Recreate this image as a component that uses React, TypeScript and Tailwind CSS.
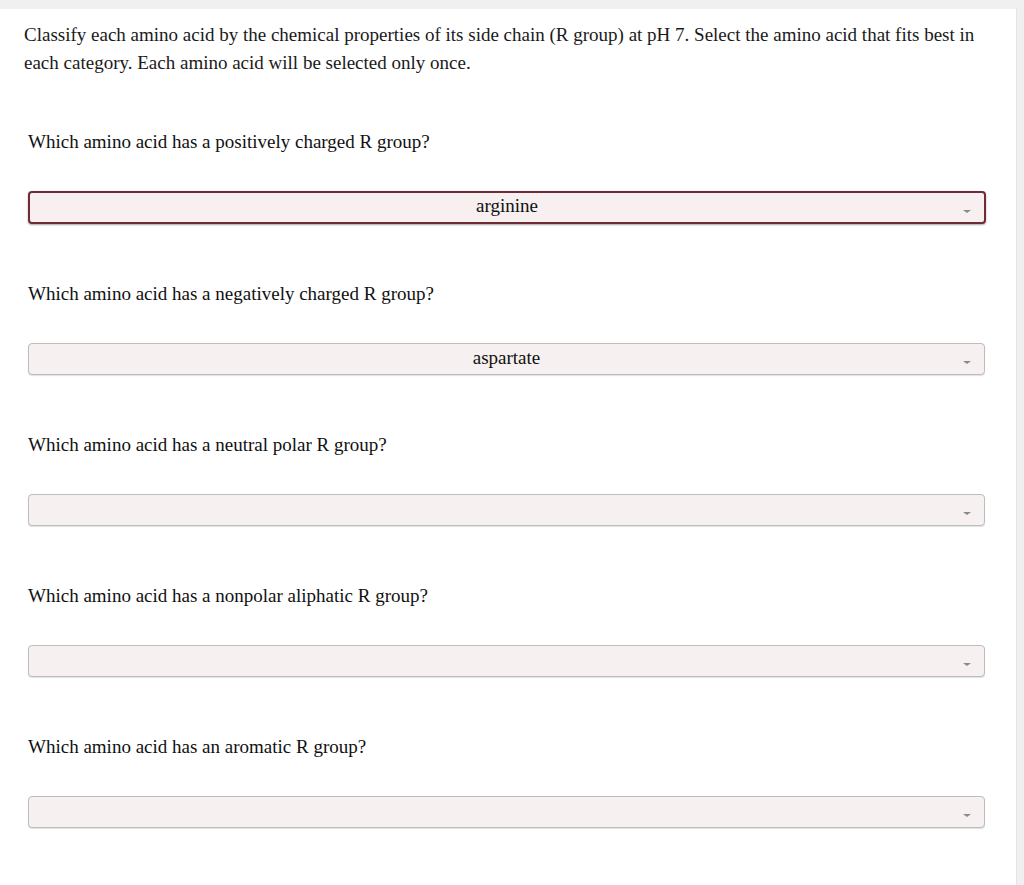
const questions = [
  { text: 'Which amino acid has a positively charged R group?', value: 'arginine', active: true },
  { text: 'Which amino acid has a negatively charged R group?', value: 'aspartate', active: false },
  { text: 'Which amino acid has a neutral polar R group?', value: '', active: false },
  { text: 'Which amino acid has a nonpolar aliphatic R group?', value: '', active: false },
  { text: 'Which amino acid has an aromatic R group?', value: '', active: false },
];

function Select({ value, active }: { value: string; active: boolean }) {
  return (
    <div
      className={
        active
          ? 'relative flex h-[33px] w-[958px] items-center justify-center rounded-[4px] border-2 border-[#6e2c36] bg-[#f7eff0] shadow-[0_1px_2px_rgba(0,0,0,0.35)]'
          : 'relative flex h-[32px] w-[957px] items-center justify-center rounded-[4px] border border-[#bdbdbd] bg-[#f6f0f0] shadow-[0_1px_1px_rgba(0,0,0,0.12)]'
      }
    >
      <span className="-mt-[3px] text-[19px] leading-[22px] text-[#111]">{value}</span>
      <span className="absolute right-[13px] top-[17px] h-0 w-0 border-x-[4px] border-t-[3px] border-x-transparent border-t-[#8a8a8a]" />
    </div>
  );
}

export default function App() {
  return (
    <div
      className="min-h-[885px] bg-[#f0f0f0] pr-[7px] pt-[9px]"
      style={{ fontFamily: '"Liberation Serif", "Times New Roman", serif' }}
    >
      <div className="h-[876px] border-r border-[#e4e4e4] bg-white">
        <p className="px-[24px] pt-[12px] text-[19px] leading-[28px] text-[#1a1a1a]">
          Classify each amino acid by the chemical properties of its side chain (R group) at pH 7. Select the amino acid
          that fits best in each category. Each amino acid will be selected only once.
        </p>

        <div className="mt-[53px] pl-[28px]">
          {questions.map((q) => (
            <div key={q.text} className="mb-[58px]">
              <p className="h-[24px] text-[19px] leading-[24px] text-[#111]">{q.text}</p>
              <div className="mt-[37px]">
                <Select value={q.value} active={q.active} />
              </div>
            </div>
          ))}
        </div>
      </div>
    </div>
  );
}
